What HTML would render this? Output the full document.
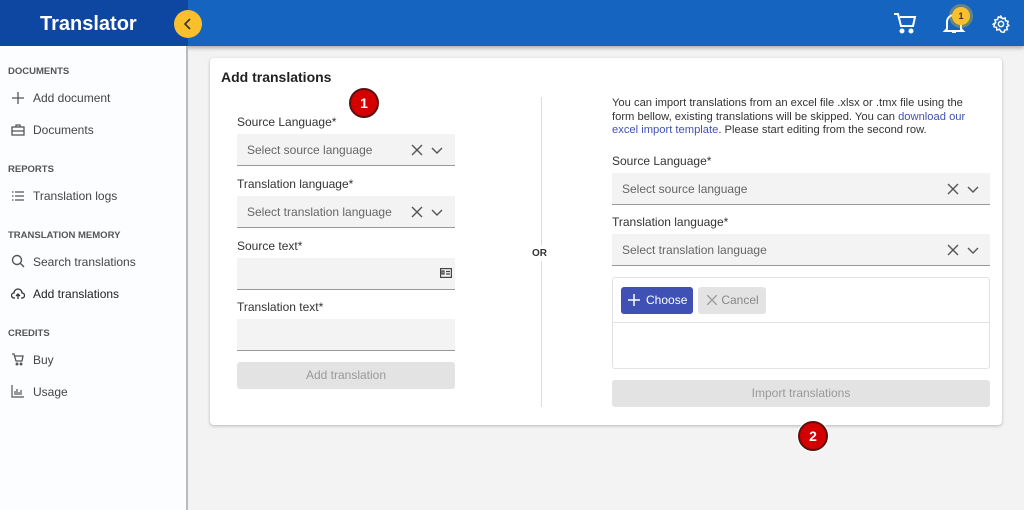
<!DOCTYPE html><html><head><style>
*{margin:0;padding:0;box-sizing:border-box}
body{width:1024px;height:510px;overflow:hidden;font-family:"Liberation Sans",sans-serif;background:#f3f3f3;position:relative;font-size:12px;color:#333}
.a{position:absolute}
.hdr{left:0;top:0;width:1024px;height:46px;background:#1565c0;box-shadow:0 2px 4px rgba(0,0,0,.3)}
.side{left:0;top:46px;width:188px;height:464px;background:#fbfdfe;border-right:2px solid #bbb}
.sec{left:8px;font-size:9.5px;font-weight:bold;color:#555}
.it{left:33px;font-size:12px;color:#444}
.ic{left:11px;width:14px;height:14px}
.card{left:210px;top:58px;width:792px;height:367px;background:#fff;border-radius:4px;box-shadow:0 1px 3px rgba(0,0,0,.25)}
.lbl{font-size:12px;color:#333}
.inp{background:#f3f3f3;border-bottom:1px solid #999;height:32px;font-size:12px;color:#666;padding:9px 10px;position:absolute}
.xc{position:absolute;top:10px}
.btn{background:#e3e3e3;color:#999;border-radius:3px;text-align:center;font-size:12px}
.badge{width:30px;height:30px;border-radius:50%;background:#d40000;border:2px solid #5a1010;color:#fff;font-weight:bold;font-size:14px;text-align:center;line-height:26px;box-shadow:0 0 0 1px #fff}
</style></head><body>
<svg width="0" height="0" style="position:absolute"><defs>
<symbol id="xc" viewBox="0 0 34 12"><path d="M1 1l10 10M11 1L1 11" stroke="#555" stroke-width="1.4" fill="none"/><path d="M21 4l5 5 5-5" stroke="#555" stroke-width="1.4" fill="none"/></symbol></defs></svg>
<div class="a hdr"></div>
<div class="a" style="left:0;top:0;width:188px;height:46px;background:#0d47a1"></div>
<div class="a" style="left:40px;top:13px;font-size:20px;font-weight:bold;color:#fff">Translator</div>
<div class="a" style="left:174px;top:10px;width:28px;height:28px;border-radius:50%;background:#f9c02c"></div>
<svg class="a" style="left:183px;top:18px" width="10" height="12" viewBox="0 0 10 12"><path d="M7 1L2 6l5 5" stroke="#333" stroke-width="1.6" fill="none"/></svg>
<svg class="a" style="left:893px;top:12px" width="24" height="22" viewBox="0 0 24 22" fill="none" stroke="#fff" stroke-width="2"><path d="M1 2h4l3 12h12l2-9H7"/><circle cx="9" cy="19" r="1.5" fill="#fff"/><circle cx="18" cy="19" r="1.5" fill="#fff"/></svg>
<svg class="a" style="left:942px;top:11px" width="24" height="24" viewBox="0 0 24 24" fill="none" stroke="#fff" stroke-width="2"><path d="M5 18V11a7 7 0 0 1 14 0v7l2 2H3z"/><path d="M10 21h4"/></svg>
<div class="a" style="left:952px;top:7px;width:18px;height:18px;border-radius:50%;background:#f9c02c;box-shadow:0 0 0 3px rgba(249,192,44,.35);font-size:9px;font-weight:bold;text-align:center;line-height:18px;color:#333">1</div>
<svg class="a" style="left:992px;top:15px" width="18" height="18" viewBox="0 0 24 24" fill="none" stroke="#fff" stroke-width="2"><circle cx="12" cy="12" r="3.5"/><path d="M12 2l2 3 3.5-1 .5 3.5 3.5 1-1 3.5 2 2-3 2 1 3.5-3.5.5-1 3.5-3.5-1L12 22l-2-3-3.5 1-.5-3.5-3.5-1 1-3.5L2 12l3-2-1-3.5 3.5-.5 1-3.5 3.5 1z"/></svg>
<div class="a side"></div>
<div class="a sec" style="top:66px">DOCUMENTS</div>
<svg class="a ic" style="top:91px" viewBox="0 0 14 14"><path d="M7 1v12M1 7h12" stroke="#555" stroke-width="1.3"/></svg><div class="a it" style="top:91px">Add document</div>
<svg class="a ic" style="top:123px" viewBox="0 0 14 14" fill="none" stroke="#555" stroke-width="1.3"><rect x="1" y="4" width="12" height="8"/><path d="M5 4V2h4v2M1 8h12"/></svg><div class="a it" style="top:123px">Documents</div>
<div class="a sec" style="top:164px">REPORTS</div>
<svg class="a ic" style="top:189px" viewBox="0 0 14 14"><path d="M1 3h1.5M4 3h9M1 7h1.5M4 7h9M1 11h1.5M4 11h9" stroke="#555" stroke-width="1.2"/></svg><div class="a it" style="top:189px">Translation logs</div>
<div class="a sec" style="top:230px">TRANSLATION MEMORY</div>
<svg class="a ic" style="top:254px" viewBox="0 0 14 14" fill="none" stroke="#555" stroke-width="1.4"><circle cx="6" cy="6" r="4.5"/><path d="M9.5 9.5 13 13"/></svg><div class="a it" style="top:255px">Search translations</div>
<svg class="a ic" style="top:287px" viewBox="0 0 14 14" fill="none" stroke="#333" stroke-width="1.3"><path d="M4 11H3a2.5 2.5 0 0 1 0-5 4 4 0 0 1 8 0 2.5 2.5 0 0 1 0 5h-1M7 12V7M5 9l2-2 2 2"/></svg><div class="a it" style="top:287px;color:#222">Add translations</div>
<div class="a sec" style="top:328px">CREDITS</div>
<svg class="a ic" style="top:352px" viewBox="0 0 14 14" fill="none" stroke="#555" stroke-width="1.3"><path d="M1 2h2l2 7h6l1-5H4"/><circle cx="6" cy="12" r=".8"/><circle cx="10" cy="12" r=".8"/></svg><div class="a it" style="top:353px">Buy</div>
<svg class="a ic" style="top:384px" viewBox="0 0 14 14" fill="none" stroke="#555" stroke-width="1.2"><path d="M1 1v12h12M4 11V7M6 11V5M8 11V8M10 11V6"/></svg><div class="a it" style="top:385px">Usage</div>
<div class="a card"></div>
<div class="a" style="left:221px;top:69px;font-size:14px;font-weight:bold;color:#222">Add translations</div>
<div class="a lbl" style="left:237px;top:115px">Source Language*</div>
<div class="inp" style="left:237px;top:134px;width:218px">Select source language<svg class="xc" style="left:174px" width="34" height="12"><use href="#xc"/></svg></div>
<div class="a lbl" style="left:237px;top:177px">Translation language*</div>
<div class="inp" style="left:237px;top:196px;width:218px">Select translation language<svg class="xc" style="left:174px" width="34" height="12"><use href="#xc"/></svg></div>
<div class="a lbl" style="left:237px;top:239px">Source text*</div>
<div class="inp" style="left:237px;top:258px;width:218px"><svg style="position:absolute;left:203px;top:10px" width="12" height="10" viewBox="0 0 12 10" fill="none" stroke="#444" stroke-width="1.2"><rect x=".6" y=".6" width="10.8" height="8.8"/><path d="M6 3.5h4M6 6h4M2 3h2v3H2z"/></svg></div>
<div class="a lbl" style="left:237px;top:300px">Translation text*</div>
<div class="inp" style="left:237px;top:319px;width:218px"></div>
<div class="a btn" style="left:237px;top:362px;width:218px;height:27px;line-height:27px">Add translation</div>
<div class="a" style="left:541px;top:97px;width:1px;height:310px;background:#ddd"></div>
<div class="a" style="left:532px;top:246px;font-size:10px;font-weight:bold;color:#333;background:#fff;padding:2px 0">OR</div>
<div class="a" style="left:612px;top:97px;width:370px;font-size:11.2px;line-height:13.5px;color:#333">You can import translations from an excel file .xlsx or .tmx file using the form bellow, existing translations will be skipped. You can <span style="color:#3f51b5">download our excel import template</span>. Please start editing from the second row.</div>
<div class="a lbl" style="left:612px;top:154px">Source Language*</div>
<div class="inp" style="left:612px;top:173px;width:378px">Select source language<svg class="xc" style="left:335px" width="34" height="12"><use href="#xc"/></svg></div>
<div class="a lbl" style="left:612px;top:215px">Translation language*</div>
<div class="inp" style="left:612px;top:234px;width:378px">Select translation language<svg class="xc" style="left:335px" width="34" height="12"><use href="#xc"/></svg></div>
<div class="a" style="left:612px;top:277px;width:378px;height:92px;border:1px solid #e2e2e2;border-radius:3px"></div>
<div class="a" style="left:612px;top:322px;width:378px;height:1px;background:#e2e2e2"></div>
<div class="a" style="left:621px;top:287px;width:72px;height:27px;background:#3f51b5;border-radius:3px;color:#fff;font-size:12px;line-height:27px;padding-left:25px">Choose</div>
<svg class="a" style="left:628px;top:294px" width="12" height="12" viewBox="0 0 12 12"><path d="M6 0v12M0 6h12" stroke="#fff" stroke-width="1.5"/></svg>
<div class="a btn" style="left:698px;top:287px;width:68px;height:27px;line-height:27px;color:#888;padding-left:16px">Cancel</div>
<svg class="a" style="left:707px;top:295px" width="10" height="10" viewBox="0 0 10 10"><path d="M0 0l10 10M10 0L0 10" stroke="#999" stroke-width="1.3"/></svg>
<div class="a btn" style="left:612px;top:380px;width:378px;height:27px;line-height:27px">Import translations</div>
<div class="a badge" style="left:349px;top:88px">1</div>
<div class="a badge" style="left:798px;top:421px">2</div>
</body></html>
